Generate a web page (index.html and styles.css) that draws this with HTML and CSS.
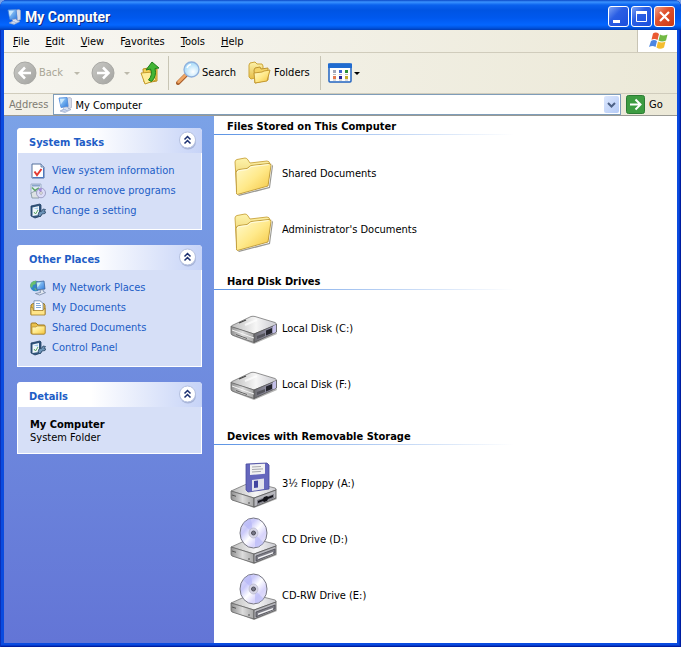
FILE: index.html
```html
<!DOCTYPE html>
<html lang="en">
<head>
<meta charset="utf-8">
<meta name="viewport" content="width=device-width, initial-scale=1">
<title>My Computer</title>
<link rel="stylesheet" href="styles.css">
</head>
<body>
<svg class="sprite" aria-hidden="true">
  <defs>
    <linearGradient id="gFolder" x1="0" y1="0" x2="1" y2="1"><stop offset="0" stop-color="#fffbd0"/><stop offset=".5" stop-color="#ffe98a"/><stop offset="1" stop-color="#f3c33c"/></linearGradient>
    <linearGradient id="gBack" x1="0" y1="0" x2="0" y2="1"><stop offset="0" stop-color="#fdf3ac"/><stop offset="1" stop-color="#e6bd45"/></linearGradient>
    <linearGradient id="gTop" x1="0" y1="0" x2="1" y2="0"><stop offset="0" stop-color="#bcbcbc"/><stop offset=".55" stop-color="#f6f6f6"/><stop offset="1" stop-color="#c9c9cf"/></linearGradient>
    <linearGradient id="gLeft" x1="0" y1="0" x2="1" y2="0"><stop offset="0" stop-color="#8f8f8f"/><stop offset=".5" stop-color="#dcdcdc"/><stop offset="1" stop-color="#a6a6a6"/></linearGradient>
    <linearGradient id="gRight" x1="0" y1="0" x2="1" y2="0"><stop offset="0" stop-color="#6c6c70"/><stop offset="1" stop-color="#a9a6c6"/></linearGradient>
    <linearGradient id="gDisc" x1="0" y1="0" x2="1" y2="1"><stop offset="0" stop-color="#e4e4f4"/><stop offset=".3" stop-color="#c9c8fa"/><stop offset=".5" stop-color="#ffffff"/><stop offset=".7" stop-color="#d8d4fb"/><stop offset="1" stop-color="#eceaf6"/></linearGradient>
    <linearGradient id="gScreen" x1="0" y1="0" x2="1" y2="1"><stop offset="0" stop-color="#b9e4ff"/><stop offset="1" stop-color="#2a78dc"/></linearGradient>
    <linearGradient id="gGrey" x1="0" y1="0" x2="1" y2="1"><stop offset="0" stop-color="#c9c9c5"/><stop offset="1" stop-color="#a3a3a0"/></linearGradient>
    <radialGradient id="gLens" cx=".6" cy=".65" r=".6"><stop offset="0" stop-color="#ffffff"/><stop offset="1" stop-color="#a8dcfa"/></radialGradient>
  </defs>
  <symbol id="computer" viewBox="0 0 16 16">
    <path d="M10 1l3-.5 1.500 1v9l-3 1.500z" fill="#d5dbea" stroke="#9ea5ba" stroke-width=".6"/>
    <path d="M2 1l8-.5 1 9-7 1z" fill="url(#gScreen)" stroke="#4b88dc" stroke-width=".8"/>
    <path d="M3 2l5-.3-4.400 6z" fill="#d8f0ff" opacity=".8"/>
    <path d="M6 10.500l4-.6 1 1.600 3 1-6 3-5-1.500 4-2z" fill="#e6ebf6" stroke="#8a9cc0" stroke-width=".6"/>
    <path d="M4.500 13.500l5-1.500M6.500 14.500l5-1.600" stroke="#7e9bd0" stroke-width=".6"/>
  </symbol>
  <symbol id="folder" viewBox="0 0 48 48">
    <path d="M8 45l31-8 3-22-1-2 2 3-3 22-31 8z" fill="#57554b" opacity=".6"/>
    <path d="M5 12q0-2 2-2.500l8-1.500q2 0 3 2l2 3 17-2q2.500 0 3 3l-2 20-31 10z" fill="url(#gBack)" stroke="#c9a43c" stroke-width=".9"/>
    <path d="M6 23q0-3 3-3.500l8-1 4-3 18-2q2 0 2 2l-3 20.500L7.500 44.500q-1 0-1-2z" fill="url(#gFolder)" stroke="#bb9634" stroke-width=".9"/>
    <path d="M7.200 23q0-2 2-2.400l8-1 4-3 17.500-2" fill="none" stroke="#fffce0"/>
  </symbol>
  <symbol id="hdd" viewBox="0 0 48 48">
    <path d="M3 31l21 8 23-10-2-4-21 8z" fill="#555" opacity=".45"/>
    <path d="M1 22q0-1 1-1.500l19-9q2-.5 4 0l20 6q2 1 1.500 2.500L24 29z" fill="url(#gTop)" stroke="#777" stroke-width=".8"/>
    <path d="M1 21.500L24 29v8.500L2 30q-1-1-1-2z" fill="url(#gLeft)" stroke="#666" stroke-width=".8"/>
    <path d="M24 29l22.500-9.500V27L24 37.500z" fill="url(#gRight)" stroke="#555" stroke-width=".8"/>
    <path d="M43 21l3-1.200V27l-3 1.500z" fill="#c3bfe8"/>
    <path d="M9 18l7-3" stroke="#444" stroke-width="1.300"/>
    <path d="M15 20l12-5" stroke="#fff" stroke-width="2" opacity=".7"/>
    <path d="M2 25l22 8" stroke="#f4f4f4"/>
    <path d="M6 29.500l11 4" stroke="#666"/>
    <path d="M36 25.500l6-2.500v5l-6 2.500z" fill="#24242c"/>
    <path d="M27 31l8-3v3l-8 3z" fill="#54545c"/>
  </symbol>
  <symbol id="drive" viewBox="0 0 48 48">
    <path d="M3 40l21 8 23-9-2-3-21 7z" fill="#555" opacity=".5"/>
    <path d="M1 31l18-8h6l20 5q2 1 1 2l-22 8z" fill="url(#gTop)" stroke="#777" stroke-width=".8"/>
    <path d="M1 31l23 7v9L2 40q-1-1-1-2z" fill="url(#gLeft)" stroke="#666" stroke-width=".8"/>
    <path d="M24 38l22-8v8l-22 9z" fill="#b7b7bd" stroke="#555" stroke-width=".8"/>
    <path d="M2 35l4 1.300" stroke="#555"/>
    <circle cx="19" cy="43" r=".8" fill="#444"/>
  </symbol>
  <symbol id="floppy" viewBox="0 0 48 48">
    <use href="#drive"/>
    <path d="M16 4l21-1 2 2v24l-21 3-2-2z" fill="#6567bd" stroke="#4a4c9e" stroke-width=".8"/>
    <path d="M20 4.500l15-.8v10l-15 1.300z" fill="#f3f3f3"/>
    <path d="M22 7l9-.5M22 9.500l11-.6M22 12l9-.6" stroke="#a7a7ae"/>
    <path d="M22 20l12-1.500V29l-12 2z" fill="#e3e3ec"/>
    <path d="M24 21l4-.5v7l-4 .6z" fill="#4345a0"/>
    <path d="M27 40l17-6v4l-17 7z" fill="#80808a"/>
    <path d="M28 41l5-2 1-2 3-1 1 1 5-2v2l-5 2-1 2-3 1-1-1-5 2z" fill="#121218"/>
  </symbol>
  <symbol id="cd" viewBox="0 0 48 48">
    <use href="#drive"/>
    <ellipse cx="23.500" cy="17" rx="13.500" ry="15" fill="url(#gDisc)" stroke="#777783"/>
    <path d="M23 17L13 8q4-5 8-5zM25 18l9 9q-4 4-9 4z" fill="#aeb0f5" opacity=".5"/>
    <ellipse cx="23.500" cy="17" rx="4.500" ry="5" fill="#d6d5e6" stroke="#b0b0c2" stroke-width=".6"/>
    <circle cx="23.500" cy="17" r="2" fill="#777787" stroke="#4d4d58"/>
    <path d="M26 40l19-7v4l-19 8z" fill="#7d7d86" stroke="#44444b" stroke-width=".7"/>
    <path d="M28 41.500l15-5.500v1.500L28 43z" fill="#f4f4f6"/>
  </symbol>
  <symbol id="info" viewBox="0 0 16 16">
    <path d="M2 1h9l3 3v11H2z" fill="#fff" stroke="#54709c"/>
    <path d="M11 1v3h3" fill="#c4d5ef" stroke="#54709c" stroke-width=".8"/>
    <path d="M13.500 5v9.500H3" fill="none" stroke="#4c78c1"/>
    <path d="M4.500 8.500l2.500 3.500 4.500-6" fill="none" stroke="#e33a32" stroke-width="2"/>
  </symbol>
  <symbol id="programs" viewBox="0 0 16 16">
    <path d="M1 1h10v10H1z" fill="#e3ecf6" stroke="#8fa2bd" stroke-width=".8"/>
    <path d="M2 1.500h8v2H2z" fill="#8aa4cb"/><path d="M2 4.500l3 3 4-2.500" fill="none" stroke="#5ea764" stroke-width="1.500"/>
    <path d="M1 10l4-2 4 2v5H2z" fill="#dde2e4" stroke="#7e8f9c" stroke-width=".8"/>
    <ellipse cx="11" cy="10" rx="4.500" ry="4.800" fill="#dbdcf8" stroke="#8f91b8" stroke-width=".8"/>
    <path d="M11 10L8 6.500q2-2 4-1z" fill="#a48bda"/><circle cx="11" cy="10" r="1.300" fill="#fff" stroke="#888" stroke-width=".6"/>
  </symbol>
  <symbol id="control" viewBox="0 0 16 16">
    <path d="M1 3l9-2 1 1v11l-6 2-4-2z" fill="#31557d" stroke="#203e63" stroke-width=".8"/>
    <path d="M2.500 4.500L9 3v9l-6.500 1z" fill="#eff6fa"/>
    <path d="M4 9l1.500 2L8 7" fill="none" stroke="#5aa563"/>
    <path d="M3.500 5.500L8 4.500v2z" fill="#9fc9ef"/>
    <path d="M8 12l1-3 3-1 1-2 2.500.5-1.500 2 2 .5-1 1.500-3 .5-2 3z" fill="#6d94b9" stroke="#294767" stroke-width=".8"/>
  </symbol>
  <symbol id="network" viewBox="0 0 16 16">
    <circle cx="5.500" cy="6" r="5.300" fill="#3287c6"/>
    <path d="M1 3q3-3 6-2L6 4 3 5 2 8 0 6zM4 8l3 1-1 2z" fill="#6bc06e"/>
    <path d="M6 2l8-1 1 8-8 1z" fill="url(#gScreen)" stroke="#3e649c" stroke-width=".8"/>
    <path d="M7 3l4-.5-3.500 5z" fill="#c8f0ef"/>
    <path d="M10 10l3-.4.500 2 2 1-6 2.400-4-1.500 5-1z" fill="#e3e9f1" stroke="#66789a" stroke-width=".7"/>
  </symbol>
  <symbol id="documents" viewBox="0 0 16 16">
    <path d="M1 5l2-1.500h11l1 2v9H1z" fill="#e7bb48" stroke="#9b7825"/>
    <path d="M4 .8h6l3 2.500v8H4z" fill="#fff" stroke="#6885af" stroke-width=".8"/>
    <path d="M6 3.500h4M6 5.500h5M6 7.500h5" stroke="#80a9d7"/>
    <path d="M1 7l2 1v2.500h10l2-2.500v7H1z" fill="#ffe58a" stroke="#a47e24" stroke-width=".8"/>
  </symbol>
  <symbol id="smallfolder" viewBox="0 0 16 16">
    <path d="M1 4q0-1 1-1h4l2 2h6q1 0 1 1v7q0 1-1 1H2q-1 0-1-1z" fill="#eac14d" stroke="#9b7622"/>
    <path d="M2 7h4l1-1h8v7q0 1-1 1H3q-1 0-1-1z" fill="url(#gFolder)" stroke="#b48d2d" stroke-width=".7"/>
  </symbol>
  <symbol id="chevrons" viewBox="0 0 19 19">
    <circle cx="10" cy="10.500" r="8" fill="#6f7ca8" opacity=".4"/>
    <circle cx="9.500" cy="9" r="8" fill="#fff" stroke="#b3bfdf"/>
    <path d="M6.500 8.500l3-3 3 3M6.500 12.500l3-3 3 3" fill="none" stroke="#1a2f70" stroke-width="1.500"/>
  </symbol>
</svg>

<div class="window">
  <header class="titlebar">
    <svg class="icon16"><use href="#computer"/></svg>
    <h1>My Computer</h1>
    <button class="winbtn" aria-label="Minimize"><svg viewBox="0 0 19 19"><path d="M4 13h7v3H4z" fill="#fff"/></svg></button>
    <button class="winbtn" aria-label="Maximize"><svg viewBox="0 0 19 19"><path d="M4.500 5.500h10v9h-10z" fill="none" stroke="#fff"/><path d="M4 4h11v3H4z" fill="#fff"/></svg></button>
    <button class="winbtn close" aria-label="Close"><svg viewBox="0 0 19 19"><path d="M5 5l9 9M14 5l-9 9" stroke="#fff" stroke-width="2.200"/></svg></button>
  </header>

  <div class="menubar">
    <nav class="menus" aria-label="Menu">
      <button><u>F</u>ile</button>
      <button><u>E</u>dit</button>
      <button><u>V</u>iew</button>
      <button>F<u>a</u>vorites</button>
      <button><u>T</u>ools</button>
      <button><u>H</u>elp</button>
    </nav>
    <div class="flag">
      <svg viewBox="0 0 20 18">
        <path d="M5 1.500Q8-.5 11 2L9.500 8Q6.500 6 3.500 7.800z" fill="#ea5a32"/>
        <path d="M12 2.500q3 2 7.500 0L18 8.500q-4 2-7.500 0z" fill="#72b944"/>
        <path d="M3 9q3-2 6 0l-1.500 6Q4.500 13 1 15z" fill="#4d86e2"/>
        <path d="M10 9.500q3.500 2 7.500 0L16 15.500q-4 2.500-7.500 0z" fill="#f5bd2e"/>
      </svg>
    </div>
  </div>

  <div class="toolbar">
    <button class="tool" disabled>
      <svg class="icon24" viewBox="0 0 24 24"><circle cx="12" cy="12" r="11" fill="url(#gGrey)" stroke="#a8a8a4"/><path d="M18 12H7M12 6.500L6.500 12l5.500 5.500" fill="none" stroke="#fff" stroke-width="2.500"/></svg>
      <span>Back</span>
    </button>
    <button class="caret wide" disabled aria-label="Back history"></button>
    <button class="tool" disabled aria-label="Forward">
      <svg class="icon24" viewBox="0 0 24 24"><circle cx="12" cy="12" r="11" fill="url(#gGrey)" stroke="#a8a8a4"/><path d="M6 12h11M12 6.500l5.500 5.500-5.500 5.500" fill="none" stroke="#fff" stroke-width="2.500"/></svg>
    </button>
    <button class="caret" disabled aria-label="Forward history"></button>
    <button class="tool" aria-label="Up">
      <svg class="icon24" viewBox="0 0 24 24"><path d="M4 8l5-1 1 2 8-1v12L6 22l-1-1z" fill="#f4cf55" stroke="#b88f24"/><path d="M2 12l12-1 3 8-11 4z" fill="#ffee9c" stroke="#c59c2c"/><path d="M7 9l6-8 7 6-4 .5q2 8-3.500 13l-3-1.500Q14 14 11.500 8z" fill="#42b535" stroke="#1d7d1a"/></svg>
    </button>
    <span class="divider"></span>
    <button class="tool">
      <svg class="icon24" viewBox="0 0 24 24"><path d="M10 14l-8 8" stroke="#a85e2a" stroke-width="4" stroke-linecap="round"/><path d="M9.500 14l-7 7" stroke="#f0a765" stroke-width="2.500" stroke-linecap="round"/><circle cx="15.500" cy="8.500" r="7.500" fill="url(#gLens)" stroke="#8fb0dc" stroke-width="1.300"/><path d="M11 7q1-3 4-3.500" fill="none" stroke="#fff" stroke-width="1.500"/></svg>
      <span>Search</span>
    </button>
    <button class="tool folders">
      <svg class="icon24" viewBox="0 0 24 24"><path d="M1 4l1-2 5-1 2 2h5l1 2v10L3 18l-2-2z" fill="url(#gBack)" stroke="#cda538"/><path d="M6 9l1-2 5-1 1 2 7-1v12l-13 3z" fill="#f4d467" stroke="#bd9430"/><path d="M6 12l8-1 2-1 6-1-3 11-12 2z" fill="url(#gFolder)" stroke="#c59a31"/></svg>
      <span>Folders</span>
    </button>
    <span class="divider"></span>
    <button class="tool" aria-label="Views">
      <svg class="icon24" viewBox="0 0 24 24"><rect x="1" y="3" width="22" height="18" rx="1" fill="#fff" stroke="#2264c0" stroke-width="1.500"/><path d="M0 2.500h24V7H0z" fill="#1f6bd0"/><path d="M5 9h3v3H5z" fill="#a1a8bb"/><path d="M11 9h3v3h-3z" fill="#3f67d2"/><path d="M17 9h3v3h-3z" fill="#2b9136"/><path d="M5 15h3v3H5z" fill="#e57a50"/><path d="M11 15h3v3h-3z" fill="#28269a"/><path d="M17 15h3v3h-3z" fill="#c7ad28"/><path d="M5 13.500h3M11 13.500h3M17 13.500h3M5 19h3M11 19h3M17 19h3" stroke="#b8b8b8"/></svg>
      <i class="arrow"></i>
    </button>
  </div>

  <div class="addressbar">
    <label for="address">A<u>d</u>dress</label>
    <div class="combo">
      <svg class="icon16"><use href="#computer"/></svg>
      <select id="address"><option>My Computer</option></select>
      <span class="drop"><svg viewBox="0 0 15 18"><path d="M4 7l3.500 3.500L11 7" fill="none" stroke="#4d6185" stroke-width="2"/></svg></span>
    </div>
    <button class="go"><svg viewBox="0 0 19 19"><rect x=".5" y=".5" width="18" height="18" rx="2" fill="#3d9c41" stroke="#2b7c34"/><path d="M4 9.500h10M9.500 4.500l5 5-5 5" fill="none" stroke="#fff" stroke-width="2"/></svg><span>Go</span></button>
  </div>

  <div class="content">
    <aside class="sidebar">
      <section class="panel">
        <div class="panelhead"><h2>System Tasks</h2><button aria-label="Collapse System Tasks"><svg><use href="#chevrons"/></svg></button></div>
        <ul>
          <li><a href="#"><svg class="icon16"><use href="#info"/></svg>View system information</a></li>
          <li><a href="#"><svg class="icon16"><use href="#programs"/></svg>Add or remove programs</a></li>
          <li><a href="#"><svg class="icon16"><use href="#control"/></svg>Change a setting</a></li>
        </ul>
      </section>
      <section class="panel">
        <div class="panelhead"><h2>Other Places</h2><button aria-label="Collapse Other Places"><svg><use href="#chevrons"/></svg></button></div>
        <ul>
          <li><a href="#"><svg class="icon16"><use href="#network"/></svg>My Network Places</a></li>
          <li><a href="#"><svg class="icon16"><use href="#documents"/></svg>My Documents</a></li>
          <li><a href="#"><svg class="icon16"><use href="#smallfolder"/></svg>Shared Documents</a></li>
          <li><a href="#"><svg class="icon16"><use href="#control"/></svg>Control Panel</a></li>
        </ul>
      </section>
      <section class="panel">
        <div class="panelhead"><h2>Details</h2><button aria-label="Collapse Details"><svg><use href="#chevrons"/></svg></button></div>
        <div class="details"><strong>My Computer</strong><span>System Folder</span></div>
      </section>
    </aside>

    <main class="files">
      <section class="group">
        <h2>Files Stored on This Computer</h2>
        <ul>
          <li><svg><use href="#folder"/></svg>Shared Documents</li>
          <li><svg><use href="#folder"/></svg>Administrator's Documents</li>
        </ul>
      </section>
      <section class="group">
        <h2>Hard Disk Drives</h2>
        <ul>
          <li><svg><use href="#hdd"/></svg>Local Disk (C:)</li>
          <li><svg><use href="#hdd"/></svg>Local Disk (F:)</li>
        </ul>
      </section>
      <section class="group">
        <h2>Devices with Removable Storage</h2>
        <ul>
          <li><svg><use href="#floppy"/></svg>3½ Floppy (A:)</li>
          <li><svg><use href="#cd"/></svg>CD Drive (D:)</li>
          <li><svg><use href="#cd"/></svg>CD-RW Drive (E:)</li>
        </ul>
      </section>
    </main>
  </div>
</div>
</body>
</html>
```
FILE: styles.css
```css
* { box-sizing: border-box; }

body {
  margin: 0;
  background: #7ba2e7;
  color: #000;
  font: 11px/14px Tahoma, "DejaVu Sans Condensed", "DejaVu Sans", sans-serif;
}

h1, h2, ul { margin: 0; padding: 0; }
ul { list-style: none; }
svg { display: block; flex: none; }
button {
  margin: 0;
  padding: 0;
  border: 0;
  background: none;
  color: inherit;
  font: inherit;
}

.sprite { position: absolute; width: 0; height: 0; }
.icon16 { width: 16px; height: 16px; }
.icon24 { width: 24px; height: 24px; }

.window {
  display: flex;
  flex-direction: column;
  min-height: 100vh;
  padding: 0 4px 4px;
  border-radius: 7px 7px 0 0;
  background: #0a4be0;
  box-shadow: inset 1px 0 #0a2fb8, inset -1px -1px #001ea0, inset -2px -2px #0639c8;
}

.titlebar {
  display: flex;
  align-items: center;
  gap: 2px;
  height: 30px;
  margin: 0 -4px;
  padding: 3px 6px 0;
  border-radius: 7px 7px 0 0;
  background: linear-gradient(#0a48c6 0, #3a93ff 2px, #0a62ee 5px, #0054e3 10px, #0058ee 18px, #0466ff 25px, #0052dc 28px, #003bb4 30px);
  color: #fff;
}
.titlebar h1 {
  flex: 1;
  padding-left: 1px;
  font: bold 14px/18px "Trebuchet MS", Roboto, sans-serif;
  text-shadow: 1px 1px #0a2a84;
}
.winbtn {
  width: 21px;
  height: 21px;
  border: 1px solid #fff;
  border-radius: 3px;
  background: linear-gradient(135deg, #7da2f4, #2a5ee4 40%, #1b4fdc);
}
.winbtn.close { background: linear-gradient(135deg, #f0a28c, #e0512c 40%, #cc3a14); }

.menubar {
  display: flex;
  height: 23px;
  border-bottom: 1px solid #d0ccbc;
  background: linear-gradient(90deg, #f8f7f3, #ece9d8);
}
.menus {
  display: flex;
  flex: 1;
  align-items: center;
  gap: 16px;
  padding: 2px 0 0 9px;
}
.flag {
  display: grid;
  place-items: center;
  width: 40px;
  border-left: 1px solid #c8c4b4;
  background: #fff;
}
.flag svg { width: 20px; height: 18px; }

.toolbar {
  display: flex;
  align-items: center;
  height: 41px;
  padding-left: 9px;
  border-bottom: 1px solid #d0ccbc;
  background: linear-gradient(90deg, #f6f5ef, #ece9d8);
}
.tool { display: flex; align-items: center; gap: 2px; }
.tool:disabled { color: #a9a696; }
.caret { width: 24px; height: 24px; display: grid; place-items: center; }
.caret.wide { width: 28px; }
.caret::before, .arrow {
  content: "";
  width: 0;
  border: 3px solid transparent;
  border-top-color: #000;
  border-bottom: 0;
}
.caret:disabled::before { border-top-color: #bcb9ab; }
.divider {
  width: 1px;
  height: 34px;
  margin: 0 7px 0 5px;
  background: #c8c5b5;
}
.folders { margin: 0 5px 0 12px; }

.addressbar {
  display: flex;
  align-items: center;
  gap: 5px;
  height: 22px;
  padding-left: 5px;
  border-bottom: 1px solid #9a9a94;
  background: linear-gradient(90deg, #f3f1e8, #ece9d8);
}
.addressbar label { color: #7f7c73; }
.combo {
  display: flex;
  flex: 1;
  align-items: center;
  position: relative;
  height: 21px;
  padding-left: 3px;
  border: 1px solid #7f9db9;
  background: #fff;
}
.combo select {
  flex: 1;
  height: 18px;
  padding: 2px 0 0 2px;
  border: 0;
  outline: 0;
  appearance: none;
  background: none;
  color: inherit;
  font: inherit;
}
.drop {
  position: absolute;
  top: 1px;
  right: 1px;
  width: 15px;
  height: 17px;
  border-radius: 2px;
  background: linear-gradient(135deg, #dce7fd, #b5cbf7);
  pointer-events: none;
}
.go { display: flex; align-items: center; gap: 4px; width: 51px; }
.go svg { width: 19px; height: 19px; }

.content { display: flex; flex: 1; background: #fff; }

.sidebar {
  display: flex;
  flex: none;
  flex-direction: column;
  gap: 15px;
  width: 210px;
  padding: 12px 12px 12px 13px;
  background: linear-gradient(#7ba2e7, #6375d6);
}
.panel {
  border: 1px solid #fff;
  border-top: 0;
  border-radius: 4px 4px 0 0;
  background: #d6dff7;
}
.panelhead {
  display: flex;
  align-items: center;
  justify-content: space-between;
  height: 25px;
  margin: 0 -1px;
  padding: 0 5px 0 12px;
  border-radius: 4px 4px 0 0;
  background: linear-gradient(90deg, #fff 40%, #c6d3f7);
}
.panelhead h2 {
  padding-top: 4px;
  color: #215dc6;
  font: inherit;
  font-weight: bold;
}
.panelhead svg { width: 19px; height: 19px; }
.panel ul {
  display: grid;
  gap: 4px;
  padding: 10px 12px;
}
.panel a {
  display: flex;
  align-items: center;
  gap: 6px;
  color: #215dc6;
  text-decoration: none;
}
.details { display: grid; padding: 11px 12px 9px; line-height: 13px; }

.files { flex: 1; min-width: 0; }
.group { margin-bottom: 17px; }
.group h2 {
  height: 19px;
  padding: 4px 0 0 13px;
  background: linear-gradient(90deg, #5b93e4, #fff 300px) bottom / 100% 1px no-repeat;
  font: inherit;
  font-weight: bold;
}
.group ul {
  display: grid;
  gap: 8px;
  padding: 15px 0 0 16px;
}
.group li { display: flex; align-items: center; gap: 4px; line-height: 16px; }
.group li svg { width: 48px; height: 48px; }
```
